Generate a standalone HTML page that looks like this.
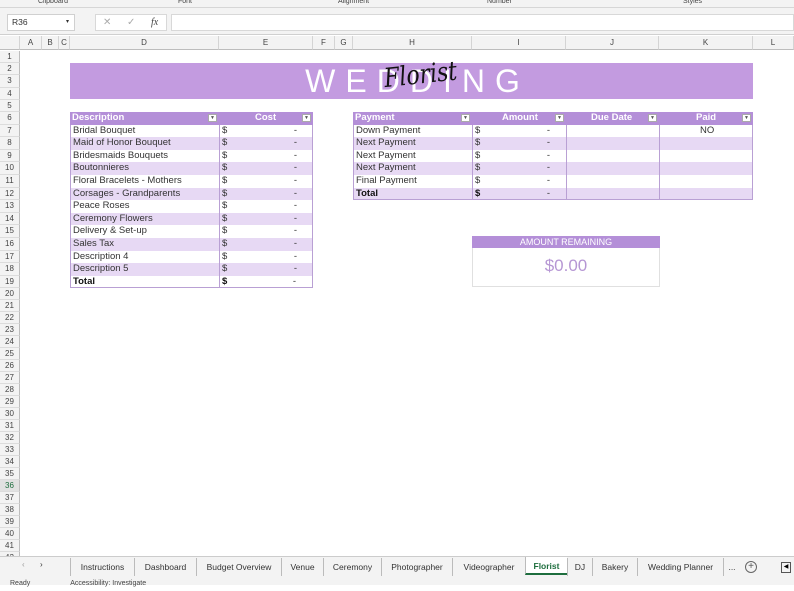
<!DOCTYPE html>
<html><head><meta charset="utf-8"><style>
*{margin:0;padding:0;box-sizing:border-box}
body{width:794px;height:585px;overflow:hidden;background:#fff;font-family:"Liberation Sans",Arial,sans-serif;position:relative}
.a{position:absolute}
.rib{left:0;top:0;width:794px;height:8px;background:#f3f3f3;border-bottom:1px solid #d6d6d6;font-size:7px;color:#444}
.fb{left:0;top:8px;width:794px;height:27px;background:#f3f3f3;border-bottom:1px solid #d0d0d0}
.ch{top:36px;height:14px;background:#f3f3f3;border-right:1px solid #d4d4d4;border-bottom:1px solid #bdbdbd;font-size:8px;color:#444;text-align:center;line-height:14px}
.rh{left:0;width:20px;background:#f3f3f3;border-bottom:1px solid #dcdcdc;border-right:1px solid #bdbdbd;font-size:8px;color:#444;text-align:center}
.c{font-size:9.5px;color:#333;white-space:nowrap;overflow:hidden;padding-left:2px}
.hd{background:#b48fd8;color:#fff;font-weight:bold}
.bd{background:#e7d9f4}
.dd{position:absolute;right:2px;top:2px;width:9px;height:8px;background:#fff;border:1px solid #aaa;font-size:5px;color:#555;text-align:center;line-height:7px}
.tab{top:558px;height:18px;font-size:8.5px;color:#333;line-height:18px;border-left:1px solid #bbb;text-align:center}
</style></head><body>
<div class="a rib"><span class="a" style="left:38px;top:-2px">Clipboard</span><span class="a" style="left:178px;top:-2px">Font</span><span class="a" style="left:338px;top:-2px">Alignment</span><span class="a" style="left:487px;top:-2px">Number</span><span class="a" style="left:683px;top:-2px">Styles</span></div>
<div class="a fb">
<div class="a" style="left:7px;top:6px;width:68px;height:17px;background:#fff;border:1px solid #d0d0d0;font-size:8.5px;line-height:15px;padding-left:4px;color:#333">R36<span style="position:absolute;right:5px;font-size:6px">▾</span></div>
<div class="a" style="left:95px;top:6px;width:72px;height:17px;background:#fff;border:1px solid #d8d8d8;font-size:10px;color:#aaa;line-height:15px"><span style="position:absolute;left:7px">✕</span><span style="position:absolute;left:31px">✓</span><span style="position:absolute;left:55px;color:#444;font-style:italic;font-family:'Liberation Serif',serif">fx</span></div>
<div class="a" style="left:171px;top:6px;width:623px;height:17px;background:#fff;border:1px solid #d8d8d8"></div>
</div>
<div id="g"></div>
<div class="a" style="left:70px;top:63px;width:683px;height:36px;background:#c39be0"></div>
<div class="a" style="left:70px;top:63px;width:683px;height:36px;color:#fff;font-size:32px;line-height:37px;text-align:center;letter-spacing:10px;padding-left:12px">WEDDING</div>
<div class="a" style="left:384px;top:63px;font-family:'DejaVu Serif',serif;font-style:italic;font-size:22px;color:#111;transform:rotate(-6deg) scaleY(1.2)">Florist</div>
<div class="a" style="left:472px;top:236px;width:188px;height:51px;border:1px solid #e0e0e0;background:#fff"></div>
<div class="a" style="left:472px;top:236px;width:188px;height:12px;background:#b48fd8;color:#fff;font-size:9px;text-align:center;line-height:12px">AMOUNT REMAINING</div>
<div class="a" style="left:472px;top:256px;width:188px;text-align:center;color:#b697d4;font-size:17px">$0.00</div>
<div class="a" style="left:0;top:556px;width:794px;height:21px;background:#f3f3f3;border-top:1px solid #ccc"></div>
<div class="a" style="left:22px;top:560px;font-size:8px;color:#999">‹</div><div class="a" style="left:40px;top:560px;font-size:8px;color:#333">›</div>
<div id="t"></div>
<div class="a" style="left:0;top:577px;width:794px;height:8px;background:#f3f3f3;font-size:7px;color:#444;line-height:14px"><span style="margin-left:10px">Ready</span><span style="margin-left:40px">Accessibility: Investigate</span></div>
<script>
var g=document.getElementById('g'),h='';
var cols=[['A',20,42],['B',42,59],['C',59,70],['D',70,219],['E',219,313],['F',313,335],['G',335,353],['H',353,472],['I',472,566],['J',566,659],['K',659,753],['L',753,794]];
h+='<div class="a ch" style="left:0;width:20px"></div>';
cols.forEach(c=>{h+='<div class="a ch" style="left:'+c[1]+'px;width:'+(c[2]-c[1])+'px">'+c[0]+'</div>'});
function y(n){if(n<=6)return 51+(n-1)*12.2;if(n<=20)return 112+(n-6)*12.6;return 288.4+(n-20)*12}
function hh(n){return y(n+1)-y(n)}
for(var i=1;i<=42;i++){h+='<div class="a rh" style="top:'+y(i)+'px;height:'+hh(i)+'px;line-height:'+hh(i)+'px'+(i==36?';color:#1e6e3e;background:#e1e1e1':'')+'">'+i+'</div>'}
function cell(x,w,r,cls,txt,ex){h+='<div class="a c '+cls+'" style="left:'+x+'px;top:'+y(r)+'px;width:'+w+'px;height:12.6px;line-height:12.6px;'+(ex||'')+'">'+txt+'</div>'}
var L=['Bridal Bouquet','Maid of Honor Bouquet','Bridesmaids Bouquets','Boutonnieres','Floral Bracelets - Mothers','Corsages - Grandparents','Peace Roses','Ceremony Flowers','Delivery &amp; Set-up','Sales Tax','Description 4','Description 5'];
var dd='<span class="dd">▼</span>';
cell(70,149,6,'hd','Description'+dd,'position:absolute');cell(219,94,6,'hd','<span style="position:absolute;left:36px">Cost</span>'+dd);
var bl='border-left:1px solid #b9a0d4;';
L.forEach((t,k)=>{var r=7+k,b=k%2?'bd':'';cell(70,149,r,b,t,'border-left:1px solid #b9a0d4');cell(219,94,r,b,'$<span style="position:absolute;right:16px">-</span>',bl)});
cell(70,149,19,'','<b style="color:#111">Total</b>','border-left:1px solid #b9a0d4;border-bottom:1px solid #b9a0d4');cell(219,94,19,'','<b style="color:#111">$</b><span style="position:absolute;right:16px">-</span>',bl+'border-right:1px solid #b9a0d4;border-bottom:1px solid #b9a0d4');
h+='<div class="a" style="left:312px;top:'+y(7)+'px;width:1px;height:'+(12*12.6)+'px;background:#b9a0d4"></div>';
cell(353,119,6,'hd','Payment'+dd);cell(472,94,6,'hd','<span style="position:absolute;left:30px">Amount</span>'+dd);cell(566,93,6,'hd','<span style="position:absolute;left:25px">Due Date</span>'+dd);cell(659,94,6,'hd','<span style="position:absolute;left:37px">Paid</span>'+dd);
var P=['Down Payment','Next Payment','Next Payment','Next Payment','Final Payment'];
P.forEach((t,k)=>{var r=7+k,b=k%2?'bd':'';cell(353,119,r,b,t,'border-left:1px solid #b9a0d4');cell(472,94,r,b,'$<span style="position:absolute;right:16px">-</span>',bl);cell(566,93,r,b,'',bl);cell(659,94,r,b,k==0?'<span style="position:absolute;left:40px">NO</span>':'',bl+'border-right:1px solid #b9a0d4')});
var tb='border-bottom:1px solid #b9a0d4;';
cell(353,119,12,'bd','<b style="color:#111">Total</b>','border-left:1px solid #b9a0d4;'+tb);cell(472,94,12,'bd','<b style="color:#111">$</b><span style="position:absolute;right:16px">-</span>',bl+tb);cell(566,93,12,'bd','',bl+tb);cell(659,94,12,'bd','',bl+tb+'border-right:1px solid #b9a0d4');
g.innerHTML=h;
var tabs=[['Instructions',70,134],['Dashboard',134,196],['Budget Overview',196,281],['Venue',281,323],['Ceremony',323,381],['Photographer',381,452],['Videographer',452,525],['Florist',525,567],['DJ',567,592],['Bakery',592,637],['Wedding Planner',637,723],['...',723,740]];
var s='';tabs.forEach(t=>{s+='<div class="a tab" style="left:'+t[1]+'px;width:'+(t[2]-t[1])+'px;'+(t[0]=='Florist'?'background:#fff;color:#1e6e3e;font-weight:bold;border-bottom:2px solid #1e6e3e;top:557px':'')+'">'+t[0]+'</div>'});
s+='<div class="a" style="left:745px;top:561px;width:12px;height:12px;border:1px solid #666;border-radius:50%;font-size:10px;line-height:10px;text-align:center;color:#555">+</div>';
s+='<div class="a" style="left:781px;top:562px;width:10px;height:11px;border:1px solid #555;font-size:6px;line-height:9px;text-align:center">◀</div>';
document.getElementById('t').innerHTML=s;
</script>
</body></html>
